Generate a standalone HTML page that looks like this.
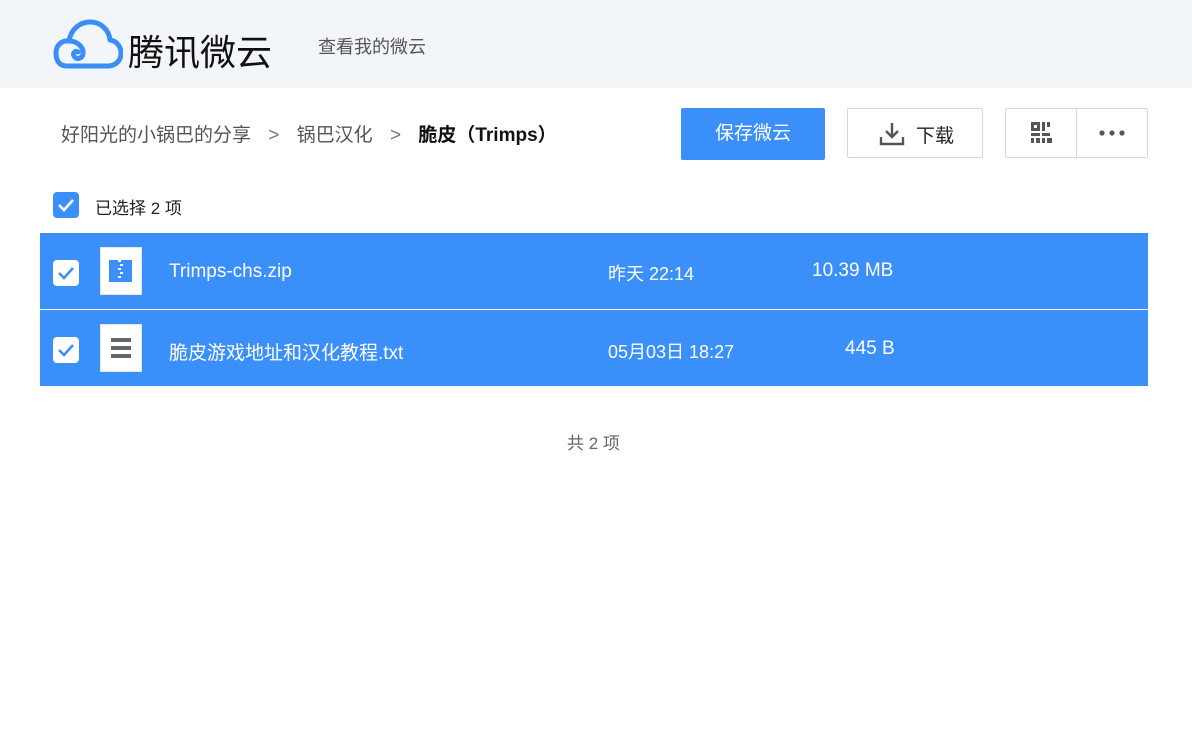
<!DOCTYPE html>
<html><head><meta charset="utf-8"><style>
*{margin:0;padding:0;box-sizing:border-box}
body{width:1192px;height:756px;background:#fff;font-family:"Liberation Sans","Noto Sans CJK SC",sans-serif;position:relative;overflow:hidden;color:#222}
.hdr{position:absolute;left:0;top:0;width:1192px;height:88px;background:#f3f6f9}
.abs{position:absolute;white-space:nowrap}
.cb{position:absolute;width:26px;height:26px;border-radius:4px}
.btn{position:absolute;border:1px solid #d6d9dc;border-radius:2px;background:#fff}
.row{position:absolute;left:40px;width:1108px;height:76px;background:#3a8ff8;color:#fff}
.ficon{position:absolute;left:60px;top:14px;width:42px;height:48px;background:#fff;border:1px solid #e2e6ea}
</style></head><body>
<div class="hdr"></div>
<svg class="abs" style="left:53px;top:18px" width="70" height="52" viewBox="0 0 70 52">
<path d="M14 48 C6 48 3 42 3 35 C3 27 9 22 16 23 C18 11 27 4 37 4 C48 4 56 12 57 22 C64 23 68 29 68 35 C68 43 62 48 55 48 Z" fill="none" stroke="#3b8ef5" stroke-width="5" stroke-linejoin="round"/>
<path d="M16 23 C24 23 31 29 30 36 C29 41 23 42 21 38 C19 35 23 32 25 34" fill="none" stroke="#3b8ef5" stroke-width="5" stroke-linecap="round"/>
</svg>
<div class="abs" style="left:128px;top:24px;font-size:36px;color:#111;letter-spacing:0px">腾讯微云</div>
<div class="abs" style="left:318px;top:33px;font-size:18px;color:#555">查看我的微云</div>

<div class="abs" style="left:61px;top:120px;font-size:19px;color:#555">好阳光的小锅巴的分享 <span style="margin:0 12px;color:#777">&gt;</span> 锅巴汉化 <span style="margin:0 12px;color:#777">&gt;</span> <b style="color:#111">脆皮（Trimps）</b></div>

<div class="abs" style="left:681px;top:108px;width:144px;height:52px;background:#3a8ff8;border-radius:2px;color:#fff;font-size:19px;text-align:center;line-height:52px">保存微云</div>
<div class="btn" style="left:847px;top:108px;width:136px;height:50px"></div>
<svg class="abs" style="left:879px;top:122px" width="26" height="24" viewBox="0 0 26 24"><path d="M13 1v13M7 9l6 6 6-6" stroke="#555" stroke-width="2.4" fill="none"/><path d="M2 15v7h22v-7" stroke="#555" stroke-width="2.4" fill="none"/></svg>
<div class="abs" style="left:916px;top:121px;font-size:19px;color:#222">下载</div>
<div class="btn" style="left:1005px;top:108px;width:143px;height:50px"></div>
<div class="abs" style="left:1076px;top:109px;width:1px;height:48px;background:#d6d9dc"></div>
<svg class="abs" style="left:1031px;top:122px" width="22" height="22" viewBox="0 0 22 22" fill="#555"><rect x="0" y="0" width="9" height="9"/><rect x="3" y="3" width="3" height="3" fill="#fff"/><rect x="11" y="0" width="3" height="9"/><rect x="16" y="0" width="3" height="5"/><rect x="0" y="11" width="9" height="3"/><rect x="11" y="11" width="8" height="3"/><rect x="0" y="16" width="3" height="5"/><rect x="5" y="16" width="4" height="5"/><rect x="11" y="16" width="3" height="5"/><rect x="16" y="16" width="5" height="5"/></svg>
<svg class="abs" style="left:1099px;top:130px" width="26" height="6"><circle cx="3" cy="3" r="2.6" fill="#555"/><circle cx="13" cy="3" r="2.6" fill="#555"/><circle cx="23" cy="3" r="2.6" fill="#555"/></svg>

<div class="cb" style="left:53px;top:192px;background:#3a8ff8"></div>
<svg class="abs" style="left:57px;top:197px" width="18" height="16"><path d="M2 8l5 5 9-10" stroke="#fff" stroke-width="2.5" fill="none"/></svg>
<div class="abs" style="left:95px;top:194px;font-size:17px;color:#222">已选择 2 项</div>

<div class="row" style="top:233px">
 <div class="cb" style="left:13px;top:27px;background:#fff"></div>
 <svg class="abs" style="left:17px;top:32px" width="18" height="16"><path d="M2 8l5 5 9-10" stroke="#3a8ff8" stroke-width="2.5" fill="none"/></svg>
 <div class="ficon"><div style="position:absolute;left:8px;top:12px;width:23px;height:22px;background:#3a8ff8"></div><svg style="position:absolute;left:15px;top:12px" width="8" height="22"><path d="M2 1h3M4 5h3M2 9h3M4 13h3M2 17h3" stroke="#fff" stroke-width="2"/></svg></div>
 <div class="abs" style="left:129px;top:28px;font-size:19px">Trimps-chs.zip</div>
 <div class="abs" style="left:568px;top:27px;font-size:18px">昨天 22:14</div>
 <div class="abs" style="left:772px;top:27px;font-size:19px">10.39 MB</div>
</div>
<div class="row" style="top:310px">
 <div class="cb" style="left:13px;top:27px;background:#fff"></div>
 <svg class="abs" style="left:17px;top:32px" width="18" height="16"><path d="M2 8l5 5 9-10" stroke="#3a8ff8" stroke-width="2.5" fill="none"/></svg>
 <div class="ficon"><div style="position:absolute;left:10px;top:13px;width:20px;height:4px;background:#666"></div><div style="position:absolute;left:10px;top:21px;width:20px;height:4px;background:#666"></div><div style="position:absolute;left:10px;top:29px;width:20px;height:4px;background:#666"></div></div>
 <div class="abs" style="left:129px;top:28px;font-size:19px">脆皮游戏地址和汉化教程.txt</div>
 <div class="abs" style="left:568px;top:28px;font-size:18px">05月03日 18:27</div>
 <div class="abs" style="left:805px;top:28px;font-size:19px">445 B</div>
</div>
<div class="abs" style="left:567px;top:429px;font-size:17px;color:#666">共 2 项</div>
</body></html>
